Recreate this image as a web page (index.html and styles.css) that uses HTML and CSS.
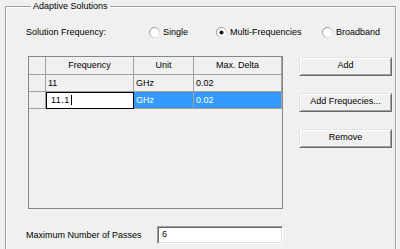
FILE: index.html
```html
<!DOCTYPE html>
<html>
<head>
<meta charset="utf-8">
<link rel="stylesheet" href="styles.css">
</head>
<body>
<fieldset class="group">
  <legend class="group-title">Adaptive Solutions</legend>
  <div class="freq-row">
    <span class="freq-label">Solution Frequency:</span>
    <span class="radio radio-single">
      <svg class="radio-icon" width="11" height="11" viewBox="0 0 11 11"><defs><linearGradient id="rg1" x1="0" y1="0" x2="1" y2="1"><stop offset="0" stop-color="#7a7a7a"/><stop offset="0.55" stop-color="#b8b8b8"/><stop offset="1" stop-color="#ffffff"/></linearGradient></defs><circle cx="5.5" cy="5.5" r="5" fill="#fff" stroke="url(#rg1)" stroke-width="1"/></svg>
      <span>Single</span>
    </span>
    <span class="radio radio-multi">
      <svg class="radio-icon" width="11" height="11" viewBox="0 0 11 11"><defs><linearGradient id="rg2" x1="0" y1="0" x2="1" y2="1"><stop offset="0" stop-color="#7a7a7a"/><stop offset="0.55" stop-color="#b8b8b8"/><stop offset="1" stop-color="#ffffff"/></linearGradient></defs><circle cx="5.5" cy="5.5" r="5" fill="#fff" stroke="url(#rg2)" stroke-width="1"/><circle cx="5.5" cy="5.5" r="2" fill="#111"/></svg>
      <span>Multi-Frequencies</span>
    </span>
    <span class="radio radio-broad">
      <svg class="radio-icon" width="11" height="11" viewBox="0 0 11 11"><defs><linearGradient id="rg3" x1="0" y1="0" x2="1" y2="1"><stop offset="0" stop-color="#7a7a7a"/><stop offset="0.55" stop-color="#b8b8b8"/><stop offset="1" stop-color="#ffffff"/></linearGradient></defs><circle cx="5.5" cy="5.5" r="5" fill="#fff" stroke="url(#rg3)" stroke-width="1"/></svg>
      <span>Broadband</span>
    </span>
  </div>

  <div class="main-row">
    <div class="grid">
      <div class="grid-row head">
        <div class="cell rowhead"></div>
        <div class="cell hcell">Frequency</div>
        <div class="cell hcell">Unit</div>
        <div class="cell hcell">Max. Delta</div>
      </div>
      <div class="grid-row">
        <div class="cell rowhead"></div>
        <div class="cell">11</div>
        <div class="cell">GHz</div>
        <div class="cell">0.02</div>
      </div>
      <div class="grid-row">
        <div class="cell rowhead"></div>
        <div class="cell editing"><span class="caret">11.1</span></div>
        <div class="cell selected">GHz</div>
        <div class="cell selected">0.02</div>
      </div>
    </div>
    <div class="buttons">
      <div class="btn">Add</div>
      <div class="btn">Add Frequecies...</div>
      <div class="btn">Remove</div>
    </div>
  </div>

  <div class="passes-row">
    <span class="passes-label">Maximum Number of Passes</span>
    <div class="textbox">6</div>
  </div>
</fieldset>
</body>
</html>
```

FILE: styles.css
```css
* { box-sizing: border-box; }

body {
  margin: 0;
  background: #f0f0f0;
  font-family: "Liberation Sans", Arial, sans-serif;
  font-size: 9px;
  color: #000;
  overflow: hidden;
}

.group {
  margin: 0 4px 0 5px;
  padding: 0 0 0 20px;
  border: 1px solid #a0a0a0;
  box-shadow: inset 1px 1px 0 #fff, 1px 1px 0 #fff;
  min-height: 270px;
}

.group-title {
  margin-left: 5px;
  padding: 0 2px;
  line-height: 12px;
  background: #f0f0f0;
}

.freq-row {
  display: flex;
  align-items: center;
  height: 12px;
  margin-top: 14px;
}

.freq-label {
  width: 123px;
}

.radio {
  display: flex;
  align-items: center;
  gap: 3px;
}

.radio-icon { display: block; }

.radio-single { width: 67px; }
.radio-multi { width: 106px; }

.main-row {
  display: flex;
  margin-top: 18px;
  margin-left: 2px;
}

.grid {
  width: 255px;
  height: 153px;
  border: 1px solid #828790;
  background: #f0f0f0;
}

.grid-row {
  display: grid;
  grid-template-columns: 17px 88px 60px 88px;
  height: 17px;
}

.grid-row.head { height: 18px; }

.cell {
  border-right: 1px solid #a0a0a0;
  border-bottom: 1px solid #a0a0a0;
  padding-left: 2px;
  line-height: 16px;
  white-space: nowrap;
  overflow: hidden;
}

.grid-row.head .cell { line-height: 17px; }

.cell.rowhead { padding: 0; }

.cell.hcell {
  text-align: center;
  padding: 0;
}

.cell.editing {
  background: #fff;
  border: 1px solid #000;
  padding-left: 4px;
  line-height: 15px;
}

.caret {
  border-right: 1px solid #000;
  padding-right: 1px;
  letter-spacing: 0.5px;
}

.cell.selected {
  background: #3399ff;
  color: #fff;
}

.buttons {
  display: flex;
  flex-direction: column;
  gap: 17px;
  margin-left: 16px;
  padding-top: 1px;
}

.btn {
  width: 93px;
  height: 19px;
  line-height: 15px;
  text-align: center;
  background: #f0f0f0;
  border: 1px solid;
  border-color: #e3e3e3 #696969 #696969 #e3e3e3;
  box-shadow: inset 1px 1px 0 #fff, inset -1px -1px 0 #a0a0a0;
}

.passes-row {
  display: flex;
  align-items: center;
  margin-top: 17px;
}

.passes-label {
  width: 131px;
}

.textbox {
  width: 126px;
  height: 18px;
  background: #fff;
  border: 1px solid;
  border-color: #a0a0a0 #fff #fff #a0a0a0;
  box-shadow: inset 1px 1px 0 #696969, inset -1px -1px 0 #e3e3e3;
  padding-left: 4px;
  line-height: 15px;
}
```
